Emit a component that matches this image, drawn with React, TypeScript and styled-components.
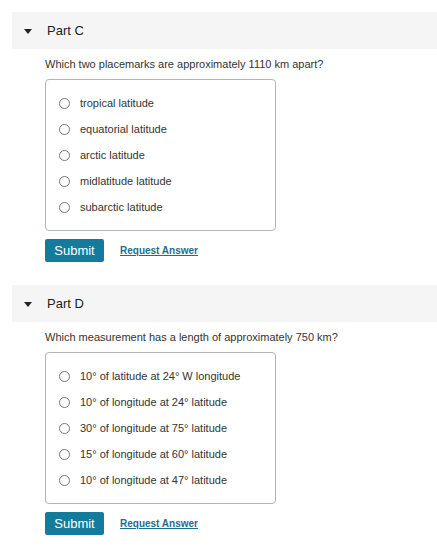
import React from "react";
import styled, { createGlobalStyle } from "styled-components";

const Global = createGlobalStyle`
  html, body { margin: 0; padding: 0; background: #ffffff; }
  body { font-family: "Liberation Sans", Arial, sans-serif; color: #333; }
`;

const Page = styled.div`
  display: flex;
  flex-direction: column;
  padding-top: 12px;
  padding-left: 12px;
`;

const Part = styled.section`
  display: flex;
  flex-direction: column;
  margin-bottom: 23px;
`;

const Header = styled.div`
  display: flex;
  align-items: center;
  height: 37px;
  background: #f5f5f5;
  padding-left: 12px;
`;

const Caret = styled.span`
  width: 0;
  height: 0;
  border-left: 4px solid transparent;
  border-right: 4px solid transparent;
  border-top: 5px solid #222;
  margin-right: 15px;
  margin-top: 1px;
`;

const Title = styled.span`
  font-size: 13px;
  color: #222;
`;

const Body = styled.div`
  display: flex;
  flex-direction: column;
  align-items: flex-start;
  padding-left: 33px;
`;

const Question = styled.p`
  margin: 9px 0 8px;
  font-size: 11px;
  line-height: 13px;
  color: #333;
`;

const Choices = styled.div`
  box-sizing: border-box;
  width: 231px;
  border: 1px solid #b3b3b3;
  border-radius: 4px;
  padding: 10px 0 10px 13px;
  display: flex;
  flex-direction: column;
`;

const Choice = styled.label`
  display: flex;
  align-items: center;
  height: 26px;
  font-size: 11px;
  color: #333;
`;

const Radio = styled.span`
  box-sizing: border-box;
  width: 11px;
  height: 11px;
  border: 1px solid #777;
  border-radius: 50%;
  margin-right: 10px;
`;

const Actions = styled.div`
  display: flex;
  align-items: center;
  margin-top: 8px;
  gap: 16px;
`;

const SubmitButton = styled.button`
  width: 59px;
  height: 23px;
  border: none;
  border-radius: 2px;
  background: #137c9d;
  color: #fff;
  font-family: "Liberation Sans", Arial, sans-serif;
  font-size: 13px;
  padding: 0;
`;

const Link = styled.a`
  font-family: "Liberation Sans", Arial, sans-serif;
  font-weight: 700;
  font-size: 10px;
  color: #1b6f8c;
  text-decoration: underline;
`;

const parts = [
  {
    title: "Part C",
    question: "Which two placemarks are approximately 1110 km apart?",
    options: [
      "tropical latitude",
      "equatorial latitude",
      "arctic latitude",
      "midlatitude latitude",
      "subarctic latitude",
    ],
  },
  {
    title: "Part D",
    question: "Which measurement has a length of approximately 750 km?",
    options: [
      "10° of latitude at 24° W longitude",
      "10° of longitude at 24° latitude",
      "30° of longitude at 75° latitude",
      "15° of longitude at 60° latitude",
      "10° of longitude at 47° latitude",
    ],
  },
];

export default function App() {
  return (
    <>
      <Global />
      <Page>
        {parts.map((p) => (
          <Part key={p.title}>
            <Header>
              <Caret />
              <Title>{p.title}</Title>
            </Header>
            <Body>
              <Question>{p.question}</Question>
              <Choices>
                {p.options.map((o) => (
                  <Choice key={o}>
                    <Radio />
                    {o}
                  </Choice>
                ))}
              </Choices>
              <Actions>
                <SubmitButton>Submit</SubmitButton>
                <Link>Request Answer</Link>
              </Actions>
            </Body>
          </Part>
        ))}
      </Page>
    </>
  );
}
